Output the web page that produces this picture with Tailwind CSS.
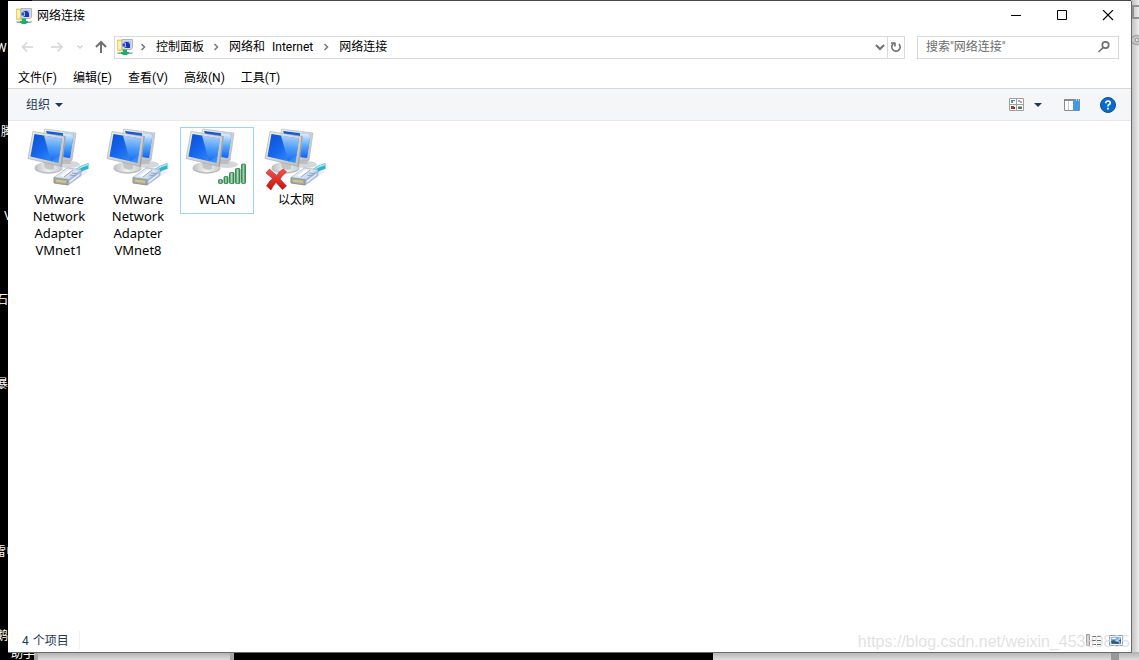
<!DOCTYPE html>
<html lang="zh-CN">
<head>
    <meta charset="UTF-8">
    <meta name="viewport" content="width=device-width, initial-scale=1.0">
    <script src="https://cdn.jsdelivr.net/npm/@tailwindcss/browser@4"></script>
    <title>网络连接</title>
</head>
<body class="relative h-screen overflow-hidden bg-black text-xs text-black font-['Roboto','Noto_Sans_CJK_SC',sans-serif]">

    <!-- shared drawings -->
    <svg class="absolute w-0 h-0" aria-hidden="true">
        <defs>
            <linearGradient id="screen" x1="0" y1="0" x2="1" y2="1">
                <stop offset="0" stop-color="#0a4fd0"/><stop offset=".45" stop-color="#1767ee"/><stop offset="1" stop-color="#3f9bfb"/>
            </linearGradient>
            <linearGradient id="shine" x1="0" y1="0" x2="0" y2="1">
                <stop offset="0" stop-color="#e4f3ff"/><stop offset=".5" stop-color="#5aa9fb"/><stop offset="1" stop-color="#1263f0"/>
            </linearGradient>
            <linearGradient id="metal" x1="0" y1="0" x2="1" y2="1">
                <stop offset="0" stop-color="#f0f0f0"/><stop offset="1" stop-color="#b9bbbc"/>
            </linearGradient>
            <linearGradient id="stand" x1="0" y1="0" x2="1" y2="0">
                <stop offset="0" stop-color="#bfc1c2"/><stop offset=".5" stop-color="#f2f2f2"/><stop offset="1" stop-color="#c9cbcc"/>
            </linearGradient>
            <linearGradient id="clear" x1="0" y1="0" x2="1" y2="1">
                <stop offset="0" stop-color="#f4f9ff"/><stop offset="1" stop-color="#b4c6e0"/>
            </linearGradient>
            <linearGradient id="bars" x1="0" y1="0" x2="1" y2="0">
                <stop offset="0" stop-color="#1f7a3f"/><stop offset=".45" stop-color="#a8dcb4"/><stop offset="1" stop-color="#217c42"/>
            </linearGradient>
            <linearGradient id="cross" x1="0" y1="0" x2="0" y2="1">
                <stop offset="0" stop-color="#f4564a"/><stop offset="1" stop-color="#c90d12"/>
            </linearGradient>
            <symbol id="monitors" viewBox="1 3 64 63">
                <ellipse cx="43" cy="39.500" rx="11" ry="3.500" fill="#d6d7d8"/>
                <path d="M36 34h8l1 5h-9z" fill="#bcbebf"/>
                <path d="M18.500 4L50 8 46 35.500 36 36 16 30z" fill="url(#metal)" stroke="#b0b2b3" stroke-width=".6"/>
                <path d="M20 6L47.500 9.500 44 33 30 31z" fill="url(#screen)"/>
                <path d="M37 8l10.500 1.500L44 33l-6-1z" fill="url(#shine)"/>
                <ellipse cx="22.500" cy="43" rx="14" ry="5.800" fill="#b9bbbc"/>
                <ellipse cx="22.500" cy="42.300" rx="13.500" ry="5" fill="url(#stand)"/>
                <path d="M17 35l11 3v6q-5 2-9-1z" fill="#c2c4c5"/>
                <path d="M7 6.500L39.500 11.500 35.500 41.500 2 33.500z" fill="url(#metal)" stroke="#a2a4a5" stroke-width=".6"/>
                <path d="M39.500 11.500l-4 30-1-.3 4-29.900z" fill="#a0a2a3"/>
                <path d="M8.500 9L36 13.500 32.500 38 4.500 31.500z" fill="url(#screen)"/>
                <path d="M18 10.500L36 13.500 33.500 31 25 36.300z" fill="url(#shine)" opacity=".75"/>
            </symbol>
            <symbol id="plug" viewBox="1 3 64 63">
                <path d="M42 61l20-14-4-3-16 14z" fill="#eceff2"/>
                <path d="M50 44q5-4 12.500-6v6q-6 1-9.500 5z" fill="#2fb2d2"/>
                <path d="M51 44.500q5-3.500 11-5" stroke="#a5e8f3" stroke-width="1.500" fill="none"/>
                <path d="M28 52.500L41 43l14 1.500v6L42 60l-14-2z" fill="url(#clear)" stroke="#93a5be" stroke-width=".6"/>
                <path d="M42 54.500l13-10v6L42 60z" fill="#a9bcd8"/>
                <path d="M28 52.500l14 2V60l-14-2z" fill="#a3aaa0" stroke="#727e88" stroke-width=".5"/>
                <path d="M30 54.500l10 1.300v2.200l-10-1.300z" fill="#d5c57b"/>
                <path d="M34 51l9-6.500 4 .5-9 6.800z" fill="#fff"/>
                <path d="M47 45l-9 7M44 50l6 1M46 48l6 1" stroke="#7f95b6" stroke-width=".8"/>
                <path d="M43.500 56l10-7.500v1.500l-10 8z" fill="#eaf3ff"/>
            </symbol>
            <symbol id="app" viewBox="0 0 16 16">
                <path d="M0 1h6v11H2l-2-1z" fill="#f3dc79" stroke="#c8ae4e" stroke-width=".5"/>
                <path d="M1 2h3v8H1z" fill="#fcf0ab"/>
                <path d="M5 .5h10.500v8.500L14 10.500H5z" fill="#d8d9dc" stroke="#8e9199" stroke-width=".6"/>
                <path d="M6.500 2h7v7h-7z" fill="#a9c2f2"/>
                <path d="M7.500 3H13v6H7.500z" fill="#1637ba"/>
                <path d="M10.500 2h3v4z" fill="#9cc4fa"/>
                <path d="M5 4h3.500v4H5z" fill="#2d4fd0" stroke="#dde4f5" stroke-width=".7"/>
                <path d="M6 10.500h4V13h5v2H10.500v1h-5v-1H1v-2h5z" fill="#18b06a"/>
                <path d="M0 13h4v1.500H0zM12 13h4v1.500h-4z" fill="#c4cbc8"/>
            </symbol>
        </defs>
    </svg>

    <!-- desktop behind the window -->
    <div class="absolute inset-0 overflow-hidden text-white" aria-hidden="true">
        <div class="absolute top-0 right-0 h-full w-[426px] bg-[#dedede]"></div>
        <div class="absolute top-0 left-8 right-0 h-px bg-[#48444a]"></div>
        <div class="absolute top-0 right-0 h-full w-2 bg-gradient-to-r from-[#bdbdbd] to-[#ededed]"></div>
        <div class="absolute top-[5px] -right-[3px] h-[14px] w-[10px] border-2 border-[#929292]"></div>
        <svg class="absolute top-[34px] -right-[6px] w-4 h-3" viewBox="0 0 16 12" fill="none" stroke="#a5a5a5" stroke-width="1.500"><path d="M1 6q7-9 14 0q-7 9-14 0z"/><circle cx="8" cy="6" r="2"/></svg>
        <div class="absolute bottom-0 right-0 h-2 w-[426px] bg-gradient-to-b from-[#b2b2b2] to-[#dedede]"></div>
        <div class="absolute bottom-0 right-5 h-2 w-2 bg-[#999]"></div>
        <div class="absolute bottom-0 left-[34px] h-2 w-[200px] border-x-4 border-[#a5a5a8] bg-gradient-to-b from-[#adadad] to-[#dedede]"></div>
        <span class="absolute top-10 -left-[4px]">W</span>
        <span class="absolute top-[124px] left-px">腾</span>
        <span class="absolute top-[208px] left-[4px]">V</span>
        <span class="absolute top-[292px] -left-[4px]">石</span>
        <span class="absolute top-[376px] -left-[4px]">暴</span>
        <span class="absolute top-[544px] -left-[6px]">雷电</span>
        <span class="absolute top-[628px] -left-[4px]">鹅</span>
        <span class="absolute top-[646px] left-[11px]">助手</span>
    </div>

    <div class="relative h-full pt-px pb-[7px] pl-2 pr-[7px]">
        <main class="flex flex-col h-full bg-white border-r border-b border-[#6b6b6b]">

            <header class="flex items-center h-[29px] pl-2">
                <svg class="w-4 h-4"><use href="#app"/></svg>
                <h1 class="ml-[5px] flex-1">网络连接</h1>
                <button class="flex w-[46px] h-full items-center justify-center" aria-label="最小化">
                    <svg class="w-3 h-3" viewBox="0 0 12 12" stroke="#000" fill="none"><path d="M1 5.500h10"/></svg>
                </button>
                <button class="flex w-[46px] h-full items-center justify-center" aria-label="最大化">
                    <svg class="w-3 h-3" viewBox="0 0 12 12" stroke="#000" fill="none"><path d="M1.500 .500h9v9h-9z"/></svg>
                </button>
                <button class="flex w-[46px] h-full items-center justify-center" aria-label="关闭">
                    <svg class="w-3 h-3" viewBox="0 0 12 12" stroke="#000" stroke-width="1.100" fill="none"><path d="M1 0l10 10M11 0L1 10"/></svg>
                </button>
            </header>

            <nav class="flex items-center h-[34px] pl-3 pr-3" aria-label="导航">
                <button aria-label="后退"><svg class="w-4 h-4" viewBox="0 0 16 16" fill="none" stroke="#d4d4d4" stroke-width="1.500"><path d="M13 8H2M7 3.500L2.500 8 7 12.500"/></svg></button>
                <button class="ml-[14px]" aria-label="前进"><svg class="w-4 h-4" viewBox="0 0 16 16" fill="none" stroke="#d4d4d4" stroke-width="1.500"><path d="M1 8h11M7.500 3.500L12 8l-4.500 4.500"/></svg></button>
                <button class="ml-[10px]" aria-label="最近的位置"><svg class="w-2 h-2" viewBox="0 0 8 8" fill="none" stroke="#d4d4d4" stroke-width="1.500"><path d="M1.500 2.500L4 5l2.500-2.500"/></svg></button>
                <button class="ml-2" aria-label="上移"><svg class="w-4 h-4" viewBox="0 0 16 16" fill="none" stroke="#707070" stroke-width="2"><path d="M9 14V3M4 8l5-5 5 5"/></svg></button>
                <div class="ml-[6px] flex flex-1 items-center h-[23px] border border-[#d9d9d9]">
                    <svg class="ml-0.5 w-4 h-4"><use href="#app"/></svg>
                    <svg class="ml-[6px] mr-[9px] w-2 h-2" viewBox="0 0 8 8" fill="none" stroke="#777" stroke-width="1.500"><path d="M2.500 1l3 3-3 3"/></svg>
                    <a href="#">控制面板</a>
                    <svg class="ml-2 mr-[9px] w-2 h-2" viewBox="0 0 8 8" fill="none" stroke="#777" stroke-width="1.500"><path d="M2.500 1l3 3-3 3"/></svg>
                    <a href="#" class="flex gap-[7px]"><span>网络和</span> <span>Internet</span></a>
                    <svg class="ml-[9px] mr-[9px] w-2 h-2" viewBox="0 0 8 8" fill="none" stroke="#777" stroke-width="1.500"><path d="M2.500 1l3 3-3 3"/></svg>
                    <a href="#" class="flex-1">网络连接</a>
                    <button class="px-px" aria-label="以前的位置"><svg class="w-3 h-3" viewBox="0 0 12 12" fill="none" stroke="#707070" stroke-width="2"><path d="M2 4l4 4 4-4"/></svg></button>
                    <button class="flex h-full w-[17px] items-center justify-center border-l border-[#d9d9d9]" aria-label="刷新">
                        <svg class="w-3 h-3" viewBox="0 0 12 12" fill="none" stroke="#707070" stroke-width="1.600"><path d="M3.500 2.500A4.200 4.200 0 1 0 9 3"/><path d="M5 5.500V1.500M1 2h4"/></svg>
                    </button>
                </div>
                <form class="ml-3 flex w-[202px] items-center h-[23px] border border-[#d9d9d9] pl-2 pr-[7px]">
                    <input type="text" aria-label="搜索" placeholder="搜索&quot;网络连接&quot;" class="min-w-0 flex-1 outline-none placeholder:text-[#6d6d6d]">
                    <button type="button" aria-label="搜索"><svg class="w-[14px] h-[14px]" viewBox="0 0 14 14" fill="none" stroke="#707070" stroke-width="1.700"><circle cx="8.500" cy="5" r="3.200"/><path d="M6.200 7.500L1.500 12"/></svg></button>
                </form>
            </nav>

            <div class="flex items-center h-6 gap-4 pl-[10px] pt-[3px]" role="menubar">
                <button role="menuitem">文件(F)</button>
                <button role="menuitem">编辑(E)</button>
                <button role="menuitem">查看(V)</button>
                <button role="menuitem">高级(N)</button>
                <button role="menuitem">工具(T)</button>
            </div>

            <div class="flex items-center h-[33px] border-y border-t-[#d9d9d9] border-b-[#e8e8e8] bg-[#f5f6f7] pl-[18px] pr-[15px] text-[#1e395b]">
                <button class="flex items-center gap-[5px]">组织
                    <svg class="w-2 h-2" viewBox="0 0 8 8" fill="#1e395b"><path d="M0 2h8L4 6z"/></svg>
                </button>
                <span class="flex-1"></span>
                <button aria-label="更改视图">
                    <svg class="w-[15px] h-[13px]" viewBox="0 0 15 13"><path d="M.5.5h14v12H.5zM7.500 0v13M0 6.500h15" fill="#fff" stroke="#a0a0a0"/>
                        <path d="M2 2h4v1H2z" fill="#3f8de0"/><path d="M2 3h2v2H2z" fill="#58a06c"/><path d="M9 2h2v2H9z" fill="#8fa8d8"/><path d="M11 3h2v2h-2z" fill="#d7a153"/><path d="M2 8h3v3H2z" fill="#c8321f"/><path d="M4 9h2v2H4z" fill="#7a2e1a"/><path d="M9 8h4v1H9z" fill="#e2ba3e"/><path d="M9 9h4v2H9z" fill="#4b7196"/></svg>
                </button>
                <button class="ml-[10px]" aria-label="更多选项"><svg class="w-2 h-2" viewBox="0 0 8 8" fill="#1e395b"><path d="M0 2h8L4 6z"/></svg></button>
                <button class="ml-[22px]" aria-label="预览窗格">
                    <svg class="w-4 h-3" viewBox="0 0 16 12"><path d="M.5.5h15v11H.5z" fill="#fff" stroke="#8a8a8a"/><path d="M0 0h16v2H0z" fill="#8a8a8a"/><path d="M4.500 2v9" stroke="#c8c8c8"/><path d="M9 1h6.500v10H9z" fill="#3f9be8"/><path d="M12 1h1M14 1h1" stroke="#fff"/></svg>
                </button>
                <button class="ml-5" aria-label="获取帮助">
                    <svg class="w-4 h-4" viewBox="0 0 16 16"><circle cx="8" cy="8" r="7.500" fill="#0a6ad0" stroke="#084f9e"/><path d="M5.800 6.200Q5.800 4 8 4t2.200 1.900Q10.200 7 9 7.600 8 8.200 8 9.500" fill="none" stroke="#fff" stroke-width="1.700"/><path d="M7.100 10.800h1.800v1.800H7.100z" fill="#fff"/></svg>
                </button>
            </div>

            <ul class="flex flex-1 items-start gap-[5px] pl-[14px] pt-[6px] text-[13px] leading-[17px] text-center font-['Noto_Sans','Noto_Sans_CJK_SC',sans-serif]">
                <li class="w-[74px] border border-transparent px-1 pb-1">
                    <svg class="w-16 h-[63px]"><use href="#monitors"/><use href="#plug"/></svg>
                    VMware Network Adapter VMnet1
                </li>
                <li class="w-[74px] border border-transparent px-1 pb-1">
                    <svg class="w-16 h-[63px]"><use href="#monitors"/><use href="#plug"/></svg>
                    VMware Network Adapter VMnet8
                </li>
                <li class="w-[74px] border border-[#99d1ff] px-1 pb-[5px]">
                    <svg class="w-16 h-[63px]"><use href="#monitors"/>
                        <g fill="url(#bars)" stroke="#2c7c49" stroke-width=".8"><rect x="33.500" y="51.500" width="4" height="4" rx="1"/><rect x="39" y="48.500" width="4" height="7" rx="1"/><rect x="44.500" y="44.500" width="4.500" height="11" rx="1"/><rect x="50.500" y="40.500" width="4.500" height="15" rx="1"/><rect x="56.500" y="36" width="4" height="19.500" rx="1"/></g>
                    </svg>
                    WLAN
                </li>
                <li class="w-[74px] border border-transparent px-1 pb-1">
                    <svg class="w-16 h-[63px]"><use href="#monitors"/><use href="#plug"/>
                        <path d="M5.500 41l7 6.500q3-4.500 7-6.500l3 3q-4 3-6.500 7l6.500 7-4 3.500-6.500-7q-3 3-5 7.500L2.500 58q2-4 6-7.500L2 45z" fill="url(#cross)" stroke="#b81a1a" stroke-width=".6"/>
                    </svg>
                    <span class="text-xs leading-[17px]">以太网</span>
                </li>
            </ul>

            <footer class="flex items-center h-6 pl-[14px] pr-2 text-[#1e395b]">
                <span class="flex gap-1 border-r border-[#f0f0f0] pr-[10px] pt-0.5"><span>4</span> <span>个项目</span></span>
                <span class="flex-1"></span>
                <button aria-label="详细信息">
                    <svg class="w-4 h-3" viewBox="0 0 16 12" fill="none"><path d="M.5.500h3v11h-3zM0 4h4M0 8h4" stroke="#999"/><path d="M1.500 2h1" stroke="#333"/><path d="M1.500 6h1" stroke="#3578c5"/><path d="M1.500 10h1" stroke="#c12"/><path d="M6 2.500h10M6 6.500h10M6 10.500h10" stroke="#666" stroke-dasharray="4 1"/></svg>
                </button>
                <button class="ml-[7px]" aria-label="大图标">
                    <svg class="w-[14px] h-[11px]" viewBox="0 0 14 11"><path d="M.5.500h13v10H.5z" fill="#fff" stroke="#8796a6"/><path d="M2 2h10v7H2z" fill="#72b4f4"/><path d="M2 6l3-1 3 2 4-3v5H2z" fill="#285e83"/><path d="M3 3h4v1H3z" fill="#fff"/></svg>
                </button>
            </footer>
        </main>
    </div>

    <p class="absolute right-[9px] bottom-[6px] text-base leading-6 text-[#d8d8d8]/75 font-['Liberation_Sans',sans-serif]">https://blog.csdn.net/weixin_45389835</p>
</body>
</html>
